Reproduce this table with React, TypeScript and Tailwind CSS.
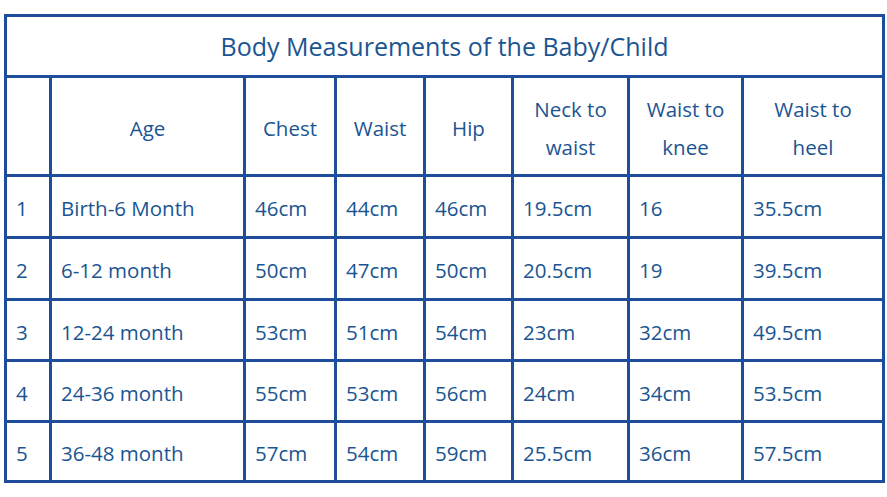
const colClasses = ["w-[45px]", "w-[194px]", "w-[91px]", "w-[89px]", "w-[88px]", "w-[116px]", "w-[114px]", "w-[141px]"];

const headers = ["", "Age", "Chest", "Waist", "Hip", "Neck to\nwaist", "Waist to\nknee", "Waist to\nheel"];

const rows = [
  { h: "h-[62px]", cells: ["1", "Birth-6 Month", "46cm", "44cm", "46cm", "19.5cm", "16", "35.5cm"] },
  { h: "h-[62px]", cells: ["2", "6-12 month", "50cm", "47cm", "50cm", "20.5cm", "19", "39.5cm"] },
  { h: "h-[61px]", cells: ["3", "12-24 month", "53cm", "51cm", "54cm", "23cm", "32cm", "49.5cm"] },
  { h: "h-[61px]", cells: ["4", "24-36 month", "55cm", "53cm", "56cm", "24cm", "34cm", "53.5cm"] },
  { h: "h-[60px]", cells: ["5", "36-48 month", "57cm", "54cm", "59cm", "25.5cm", "36cm", "57.5cm"] },
];

export default function App() {
  return (
    <div className="h-[497px] w-[887px] bg-white pl-[4px] pt-[14px] font-['Open_Sans','Noto_Sans',sans-serif] text-[#1a5592]">
      <table className="w-[881px] table-fixed border-collapse border-[3px] border-[#1d4d9b]">
        <colgroup>
          {colClasses.map((c, i) => (
            <col key={i} className={c} />
          ))}
        </colgroup>
        <thead>
          <tr className="h-[61px]">
            <th colSpan={8} className="border-[3px] border-[#1d4d9b] pt-[2px] text-center text-[25px] font-normal">
              Body Measurements of the Baby/Child
            </th>
          </tr>
          <tr className="h-[99px]">
            {headers.map((t, i) => (
              <th
                key={i}
                className="whitespace-pre-line border-[3px] border-[#1d4d9b] pt-[4px] text-center align-middle text-[20.5px] font-normal leading-[38px]"
              >
                {t}
              </th>
            ))}
          </tr>
        </thead>
        <tbody>
          {rows.map((r, ri) => (
            <tr key={ri} className={r.h}>
              {r.cells.map((c, ci) => (
                <td
                  key={ci}
                  className="border-[3px] border-[#1d4d9b] pl-[9px] pt-[4px] align-middle text-[20.5px] leading-none"
                >
                  {c}
                </td>
              ))}
            </tr>
          ))}
        </tbody>
      </table>
    </div>
  );
}
